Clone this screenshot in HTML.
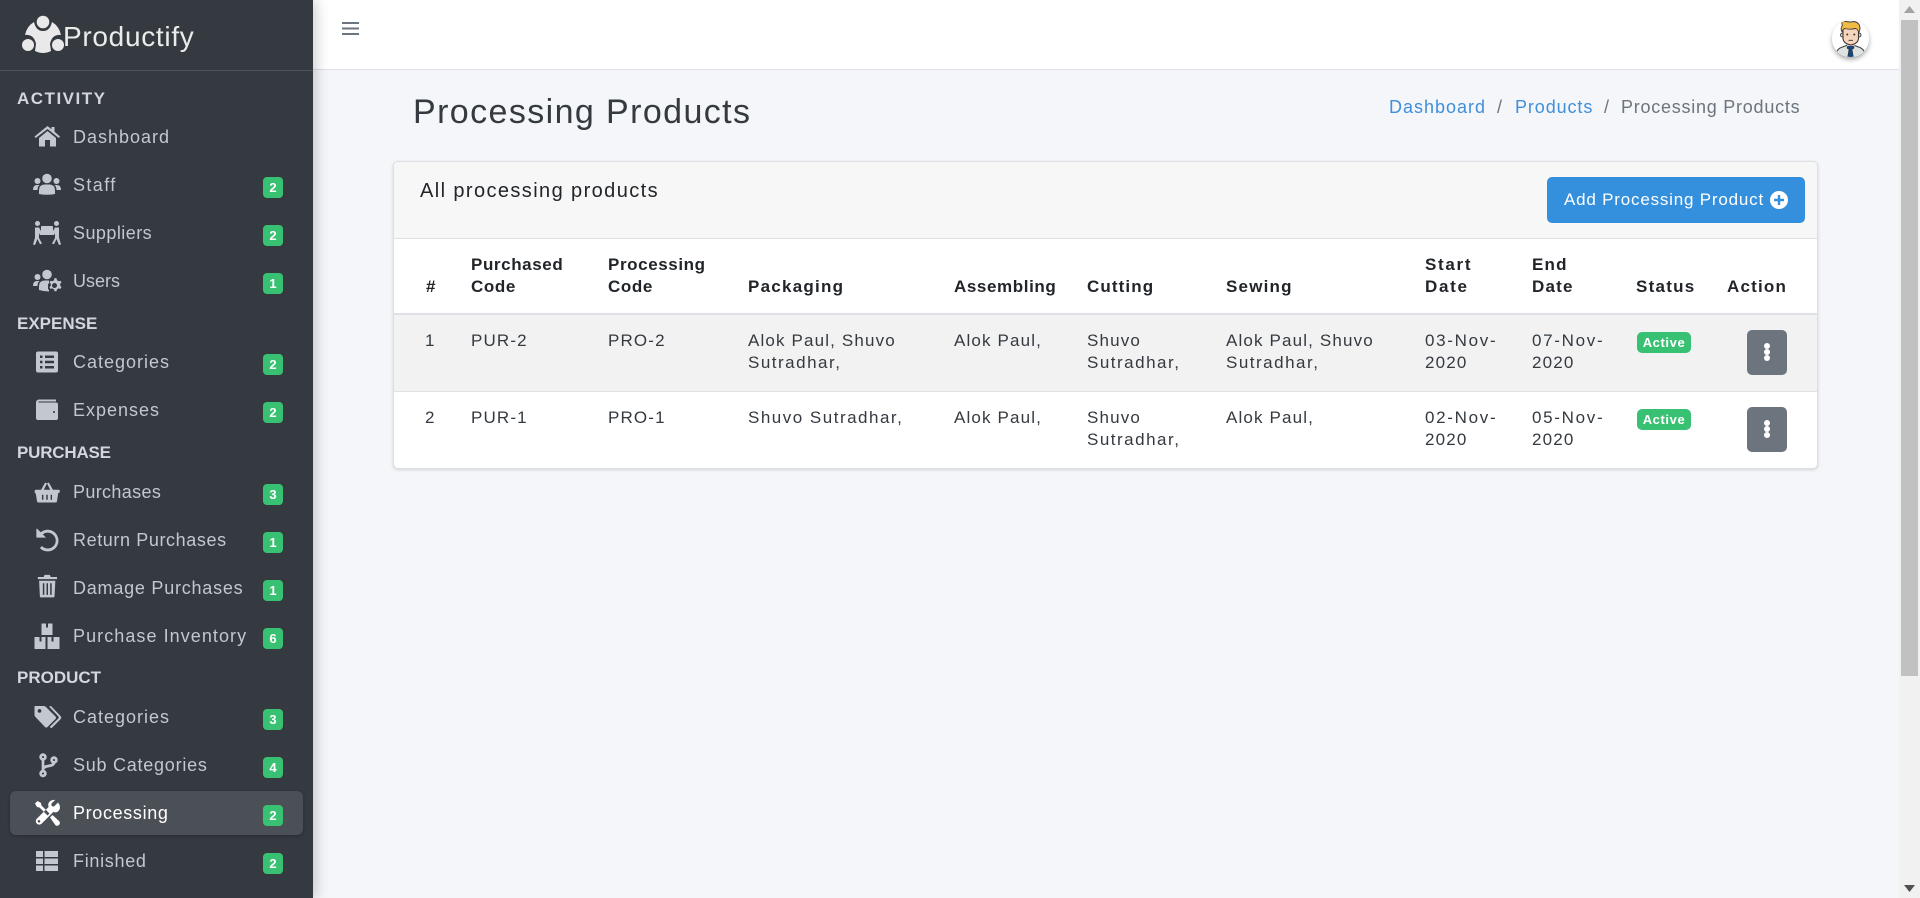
<!DOCTYPE html>
<html lang="en"><head><meta charset="utf-8"><title>Processing Products</title>
<style>
*{box-sizing:border-box}
html,body{margin:0;padding:0;width:1920px;height:898px;overflow:hidden;background:#f4f6f9;font-family:"Liberation Sans",sans-serif;color:#212529}
.abs,.sec,.lbl,.bdg,.ic{position:absolute}
#side{position:absolute;left:0;top:0;width:313px;height:898px;background:#343a40;box-shadow:2px 0 14px rgba(0,0,0,.22);z-index:3}
#brandline{position:absolute;left:0;top:70px;width:313px;height:1px;background:#4b5158}
.sec{left:17px;font-size:17px;font-weight:700;line-height:22px;color:#d3d6dc;white-space:nowrap}
.lbl{left:73px;font-size:18px;line-height:24px;letter-spacing:1px;color:#c2c7d0;white-space:nowrap}
.bdg{left:263px;width:20px;height:21px;background:#38c172;border-radius:4px;color:#fff;font-size:13px;font-weight:700;line-height:21px;text-align:center}
.ic{left:32px;width:30px;height:30px;fill:#c2c7d0;stroke:none}
#active{position:absolute;left:10px;top:791px;width:293px;height:44px;background:#4b4f56;border-radius:6px;box-shadow:0 1px 3px rgba(0,0,0,.25)}
#top{position:absolute;left:313px;top:0;width:1586px;height:70px;background:#fff;border-bottom:1px solid #dee2e6}
#track{position:absolute;left:1899px;top:0;width:21px;height:898px;background:#f1f1f1}
#thumb{position:absolute;left:1901px;top:20px;width:17px;height:656px;background:#c1c1c1}
h1{position:absolute;left:413px;top:89px;margin:0;font-size:34px;font-weight:400;line-height:46px;letter-spacing:1.4px;color:#343a40;white-space:nowrap}
.bc{position:absolute;top:95px;font-size:18px;line-height:24px;letter-spacing:.75px;white-space:nowrap}
.bc.l{color:#3f8fdb}.bc.g{color:#6c757d}
#card{position:absolute;left:393px;top:161px;width:1425px;height:308px;background:#fff;border:1px solid #dcdfe3;border-radius:5px;box-shadow:0 1px 3px rgba(0,0,0,.14);overflow:hidden}
#chead{position:absolute;left:0;top:0;width:1423px;height:77px;background:#f7f7f7;border-bottom:1px solid #dfdfdf}
#ctitle{position:absolute;left:26px;top:16px;font-size:20px;line-height:26px;letter-spacing:1.4px;color:#212529;white-space:nowrap}
#addbtn{position:absolute;left:1153px;top:15px;width:258px;height:46px;background:#3490dc;border-radius:5px;color:#fff;font-size:17px;line-height:46px;letter-spacing:.8px;padding-left:17px;white-space:nowrap}
#addbtn svg{position:absolute;left:223px;top:14px}
table{position:absolute;left:0;top:77px;width:1423px;table-layout:fixed;border-collapse:collapse}
th,td{padding:0 0 0 16px;text-align:left;font-size:17px;line-height:22px;letter-spacing:1.15px;white-space:nowrap}
th{height:75px;vertical-align:bottom;padding-bottom:15px;font-weight:700;letter-spacing:.6px;border-bottom:2px solid #dee2e6}
td{vertical-align:top;padding-top:15px;color:#343a40}
tbody tr:nth-child(1) td{height:77px;background:#f2f2f2;border-bottom:1px solid #dee2e6}
tbody tr:nth-child(2) td{height:76px}
.su{letter-spacing:1.5px}.dt{letter-spacing:1.7px}
.act{display:block;width:54px;height:21px;background:#38c172;border-radius:5px;color:#fff;font-size:13px;font-weight:700;line-height:21px;text-align:center;letter-spacing:.6px;margin:2px 0 0 1px}
.dots{display:block;position:relative;width:40px;height:45px;background:#6c757d;border-radius:5px;margin:0 0 0 20px}
.dots i{position:absolute;left:17px;width:6px;height:6px;border-radius:50%;background:#fff}
</style></head><body>

<div id="side">
  <svg class="abs" style="left:20px;top:12px" width="46" height="44" viewBox="0 0 46 44" fill="#e9e9e9">
    <circle cx="23" cy="10" r="6.3"/><circle cx="8" cy="33" r="6"/><circle cx="38" cy="33" r="6"/>
    <path d="M14 10 Q16 19 23 19 Q30 19 32 10 Q39 14 41 23 Q32 22 30 32 L31 39 Q23 43 15 39 L16 32 Q14 22 5 23 Q7 14 14 10Z"/>
  </svg>
  <div class="abs" style="left:63px;top:20px;font-size:28px;line-height:34px;letter-spacing:.7px;color:#ebebeb;white-space:nowrap">Productify</div>
  <div id="brandline"></div>

  <div id="active"></div>

  <div class="sec" style="top:88px;letter-spacing:1.5px">ACTIVITY</div>
  <div class="sec" style="top:313px">EXPENSE</div>
  <div class="sec" style="top:442px;letter-spacing:-.2px">PURCHASE</div>
  <div class="sec" style="top:667px">PRODUCT</div>

  <div class="lbl" style="top:125px">Dashboard</div>
  <div class="lbl" style="top:173px;letter-spacing:1.4px">Staff</div>
  <div class="lbl" style="top:221px;letter-spacing:.45px">Suppliers</div>
  <div class="lbl" style="top:269px;letter-spacing:0">Users</div>
  <div class="lbl" style="top:350px">Categories</div>
  <div class="lbl" style="top:398px">Expenses</div>
  <div class="lbl" style="top:480px;letter-spacing:.35px">Purchases</div>
  <div class="lbl" style="top:528px;letter-spacing:.6px">Return Purchases</div>
  <div class="lbl" style="top:576px;letter-spacing:.77px">Damage Purchases</div>
  <div class="lbl" style="top:624px;letter-spacing:1.06px">Purchase Inventory</div>
  <div class="lbl" style="top:705px">Categories</div>
  <div class="lbl" style="top:753px;letter-spacing:.75px">Sub Categories</div>
  <div class="lbl" style="top:801px;color:#fff;letter-spacing:.65px">Processing</div>
  <div class="lbl" style="top:849px;letter-spacing:.7px">Finished</div>

  <div class="bdg" style="top:177px">2</div>
  <div class="bdg" style="top:225px">2</div>
  <div class="bdg" style="top:273px">1</div>
  <div class="bdg" style="top:354px">2</div>
  <div class="bdg" style="top:402px">2</div>
  <div class="bdg" style="top:484px">3</div>
  <div class="bdg" style="top:532px">1</div>
  <div class="bdg" style="top:580px">1</div>
  <div class="bdg" style="top:628px">6</div>
  <div class="bdg" style="top:709px">3</div>
  <div class="bdg" style="top:757px">4</div>
  <div class="bdg" style="top:805px">2</div>
  <div class="bdg" style="top:853px">2</div>

  <!-- home -->
  <svg class="ic" style="top:122px" viewBox="0 0 30 30"><path d="M2.500 14.500 15.500 4l4 3.200V5h3v4.600l5.500 4.900-1.200 1.500L15.500 7 3.700 16z"/><path d="M7 16 15.500 9 24 16v8.500h-6V18h-5v6.500H7z"/></svg>
  <!-- staff -->
  <svg class="ic" style="top:170px" viewBox="0 0 30 30"><circle cx="15" cy="8.500" r="4.800"/><circle cx="5.500" cy="11" r="3"/><circle cx="24.500" cy="11" r="3"/><path d="M7 24v-3.500Q7 15 12 14.500h6Q23 15 23 20.500V24Q15 25.500 7 24z"/><path d="M1 20q0-5 4-5h2.500Q5.500 16.500 5.500 20z"/><path d="M29 20q0-5-4-5h-2.500q2 1.500 2 5z"/></svg>
  <!-- suppliers -->
  <svg class="ic" style="top:218px" viewBox="0 0 30 30"><circle cx="5.500" cy="5.500" r="2.500"/><circle cx="24.500" cy="5.500" r="2.500"/><rect x="9" y="8" width="12" height="9" rx="1"/><path d="M3 9.500h4L9.500 14v3H8l-1-2v5l3 5.500-2 .8L5.500 21 3 27l-2-.5 2-7zM27 9.500h-4L20.500 14v3H22l1-2v5l-3 5.500 2 .8 2.500-5.300 2.500 6 2-.5-2-7z"/></svg>
  <!-- users cog -->
  <svg class="ic" style="top:266px" viewBox="0 0 30 30"><circle cx="15" cy="8.500" r="4.800"/><circle cx="5.500" cy="11" r="3"/><path d="M1 20q0-5 4-5h2.500Q5.500 16.500 5.500 20z"/><path d="M7 24v-3.500Q7 15 12 14.500h5v3l-1 .5v5l1 1v1.500Q12 25.500 7 24z"/><path fill-rule="evenodd" d="M22.500 12l2 .3.500 2 1.700 1 1.800-.6 1 1.800-1.300 1.300v2l1.300 1.400-1 1.700-1.800-.5-1.700 1-.5 1.800h-2l-.5-1.800-1.700-1-1.800.5-1-1.700 1.300-1.400v-2L17.500 16.500l1-1.800 1.800.6 1.700-1 .5-2zm0 5a2.500 2.500 0 1 0 .01 0z"/></svg>
  <!-- list alt -->
  <svg class="ic" style="top:347px" viewBox="0 0 30 30"><path fill-rule="evenodd" d="M6 4.500h18a2 2 0 0 1 2 2v17a2 2 0 0 1-2 2H6a2 2 0 0 1-2-2v-17a2 2 0 0 1 2-2zM8 8.500v2.500h2.500V8.500zm5 0v2.500h9V8.500zM8 13.800v2.500h2.500v-2.500zm5 0v2.500h9v-2.500zM8 19v2.500h2.500V19zm5 0v2.500h9V19z"/></svg>
  <!-- wallet -->
  <svg class="ic" style="top:395px" viewBox="0 0 30 30"><path fill-rule="evenodd" d="M7 4.500h17v2H6.500v1H24a2 2 0 0 1 2 2v13.500a2 2 0 0 1-2 2H6a2 2 0 0 1-2-2V7.500a3 3 0 0 1 3-3zM22 16a1 1 0 1 0 .01 0z"/></svg>
  <!-- basket -->
  <svg class="ic" style="top:477px" viewBox="-1.500 -1.500 33 33"><path fill-rule="evenodd" d="M2.500 12.500h6L13 4.500l2 1-3.500 7h7l-3.500-7 2-1 4.500 8h6.500c.7 0 1 .5 1 1v1.500c0 .6-.4 1-1 1h-.6L26 25c-.1 1-.8 1.500-1.600 1.500H5.600c-.8 0-1.500-.5-1.600-1.500L2.600 16.500h-.1c-.6 0-1-.4-1-1V13.500c0-.5.4-1 1-1zM9.500 18v5.500h1.500V18zm4.700 0v5.500h1.600V18zm4.800 0v5.500h1.500V18z"/></svg>
  <!-- undo -->
  <svg class="ic" style="top:525px" viewBox="-.5 -.5 31 31"><path d="M5 3.500l2.600 2.600.9.900A11.200 11.200 0 1 1 7.600 23.400l2.200-2.200A8.200 8.200 0 1 0 10.700 9.200l3.300 3.300H4.500c-.3 0-.5-.2-.5-.5V4c0-.5.600-.8 1-.5z"/></svg>
  <!-- trash -->
  <svg class="ic" style="top:572px" viewBox="0 -2 30 36"><path fill-rule="evenodd" d="M12 1.500h6.500l1 2.500H27v2.600H4V4h7zM5.500 8.500h19.500l-1 19q-.1 1-1.200 1H7.700q-1.100 0-1.200-1zM10 11.500v14h1.800v-14zm4.400 0v14h1.800v-14zm4.400 0v14h1.800v-14z"/></svg>
  <!-- boxes -->
  <svg class="ic" style="top:621px" viewBox="0 0 30 30"><path fill-rule="evenodd" d="M9.500 2.500h4.500v4h2v-4h4.500V14h-11zM2.500 16h5v4.500h2V16h4v12h-11zM15.500 16h4v4.500h2V16h6v12h-12z"/></svg>
  <!-- tags -->
  <svg class="ic" style="top:702px" viewBox="0 0 30 30"><path fill-rule="evenodd" d="M3 4h9q1 0 2 1l9.500 9.500q1.200 1.300 0 2.500l-8 8q-1.200 1.200-2.500 0L3.500 15q-1-1-1-2V4.500zM7.500 7a1.900 1.900 0 1 0 .01 0z"/><path d="M17 4.500l2-.5 9.500 10q1.500 1.700 0 3.300l-9 9-1.800-1.300 8.800-8.800q.6-.8 0-1.600z"/></svg>
  <!-- code-branch -->
  <svg class="ic" style="top:750px" viewBox="0 0 30 30"><g fill="none" stroke="#c2c7d0" stroke-width="2.700"><circle cx="11" cy="7" r="2.400"/><circle cx="11" cy="23.500" r="2.400"/><circle cx="22" cy="10" r="2.400"/><path d="M11 9.500V21M22 12.500c0 5-11 2-11 7"/></g></svg>
  <!-- tools -->
  <svg class="ic" style="top:798px;fill:#fff" viewBox="0 0 30 30"><path d="M5.500 3 9 5l.5 2.500 8 8-2 2-8-8L5 9 3 5.500zM26 4.500 22 8.500l-2.300-.4-.4-2.300 3.900-3.900Q18.500 1.500 16.600 5q-.9 2 0 4L4.500 21a3.500 3.500 0 0 0 4.900 4.900l12-12q2 .9 4 0 3.500-2 2.200-6.900zM7 22a1.300 1.300 0 1 1-.01 0z"/><path d="M18 19.500l2.500-2.500 7 6.500q1 2-.6 3.500-1.700 1.500-3.400.3z"/></svg>
  <!-- th-list -->
  <svg class="ic" style="top:846px" viewBox="0 0 30 30"><path d="M4 5h7v6H4zM12.500 5H26v6H12.500zM4 12.500h7v5.500H4zM12.500 12.500H26v5.500H12.500zM4 19.500h7V25H4zM12.500 19.500H26V25H12.500z"/></svg>
</div>

<div id="top">
  <svg class="abs" style="left:29px;top:21px" width="18" height="16" viewBox="0 0 18 16" fill="#6c757d"><rect x="0" y="1" width="17" height="2"/><rect x="0" y="6.500" width="17" height="2"/><rect x="0" y="12" width="17" height="2"/></svg>
</div>

<svg class="abs" style="left:1826px;top:14px;z-index:2;overflow:visible" width="50" height="50" viewBox="0 0 50 50">
  <defs><clipPath id="cp"><circle cx="24.500" cy="24.500" r="18.500"/></clipPath><filter id="sh" x="-40%" y="-40%" width="180%" height="180%"><feDropShadow dx="0" dy="2.500" stdDeviation="2.500" flood-color="#000" flood-opacity=".35"/></filter></defs>
  <circle cx="24.500" cy="24.500" r="18.500" fill="#fff" filter="url(#sh)"/>
  <g clip-path="url(#cp)">
    <path d="M9.500 44q0-9 7-11l8-3 8 3q7 2 7 11z" fill="#dfe2e2" stroke="#3a3a3a" stroke-width="1.100"/>
    <path d="M22 31h5.500l.5 3-2 1.500 1.500 8.500h-6l1.500-8.500-2-1.500z" fill="#15477e" stroke="#2b2b2b" stroke-width=".6"/>
    <rect x="21" y="26" width="7.500" height="6" fill="#f2cdb2"/>
    <circle cx="16.500" cy="21" r="2" fill="#f2cdb2" stroke="#3a3a3a" stroke-width=".9"/><circle cx="33" cy="21" r="2" fill="#f2cdb2" stroke="#3a3a3a" stroke-width=".9"/>
    <path d="M17 14h15.500v10q0 5.500-7.700 7Q17 29.500 17 24z" fill="#f7d5bd" stroke="#3a3a3a" stroke-width="1.100"/>
    <path d="M15.500 17q-1-3 .8-5.500l-.8-5.500q6 3 12.500 1.500 5.500 1 6 6 0 3-1.300 5-1-3.500-3-4-6 1.300-11.200 0-1.500 1-2.500 3z" fill="#f1bb48" stroke="#3a3a3a" stroke-width=".9"/>
    <circle cx="21.300" cy="20.500" r="1" fill="#333"/><circle cx="28.300" cy="20.500" r="1" fill="#333"/>
    <path d="M22.500 26.300h4.500" stroke="#333" stroke-width=".9"/>
  </g>
</svg>

<div id="track"></div><div id="thumb"></div>
<svg class="abs" style="left:1904px;top:6px" width="11" height="7" viewBox="0 0 11 7" fill="#a3a3a3"><path d="M5.500 0 11 7H0z"/></svg>
<svg class="abs" style="left:1904px;top:885px" width="11" height="7" viewBox="0 0 11 7" fill="#505050"><path d="M0 0h11L5.500 7z"/></svg>

<h1>Processing Products</h1>
<div class="bc l" style="left:1389px;letter-spacing:1px">Dashboard</div>
<div class="bc g" style="left:1497px">/</div>
<div class="bc l" style="left:1515px;letter-spacing:.9px">Products</div>
<div class="bc g" style="left:1604px">/</div>
<div class="bc g" style="left:1621px">Processing Products</div>

<div id="card">
  <div id="chead">
    <div id="ctitle">All processing products</div>
    <div id="addbtn">Add Processing Product
      <svg width="18" height="18" viewBox="0 0 18 18"><circle cx="9" cy="9" r="9" fill="#fff"/><path d="M7.800 4h2.400v3.800H14v2.400h-3.800V14H7.800v-3.800H4V7.800h3.800z" fill="#3490dc"/></svg>
    </div>
  </div>
  <table>
    <colgroup><col style="width:61px"><col style="width:137px"><col style="width:140px"><col style="width:206px"><col style="width:133px"><col style="width:139px"><col style="width:199px"><col style="width:107px"><col style="width:104px"><col style="width:91px"><col style="width:106px"></colgroup>
    <thead><tr>
      <th style="padding-left:32px;letter-spacing:2px">#</th><th>Purchased<br>Code</th><th>Processing<br>Code</th><th style="letter-spacing:1.25px">Packaging</th><th>Assembling</th><th style="letter-spacing:1.1px">Cutting</th><th style="letter-spacing:1.2px">Sewing</th><th style="letter-spacing:1.7px">Start<br>Date</th><th style="letter-spacing:1.2px">End<br>Date</th><th style="letter-spacing:1.25px">Status</th><th style="letter-spacing:1.2px">Action</th>
    </tr></thead>
    <tbody>
      <tr>
        <td style="padding-left:31px">1</td><td>PUR-2</td><td>PRO-2</td><td>Alok Paul, Shuvo<br><span class="su">Sutradhar,</span></td><td>Alok Paul,</td><td>Shuvo<br><span class="su">Sutradhar,</span></td><td>Alok Paul, Shuvo<br><span class="su">Sutradhar,</span></td><td><span class="dt">03-Nov-</span><br>2020</td><td><span class="dt">07-Nov-</span><br>2020</td>
        <td><span class="act">Active</span></td>
        <td><span class="dots"><i style="top:13px"></i><i style="top:19px"></i><i style="top:25px"></i></span></td>
      </tr>
      <tr>
        <td style="padding-left:31px">2</td><td>PUR-1</td><td>PRO-1</td><td><span class="su">Shuvo Sutradhar,</span></td><td>Alok Paul,</td><td>Shuvo<br><span class="su">Sutradhar,</span></td><td>Alok Paul,</td><td><span class="dt">02-Nov-</span><br>2020</td><td><span class="dt">05-Nov-</span><br>2020</td>
        <td><span class="act">Active</span></td>
        <td><span class="dots"><i style="top:13px"></i><i style="top:19px"></i><i style="top:25px"></i></span></td>
      </tr>
    </tbody>
  </table>
</div>
</body></html>
